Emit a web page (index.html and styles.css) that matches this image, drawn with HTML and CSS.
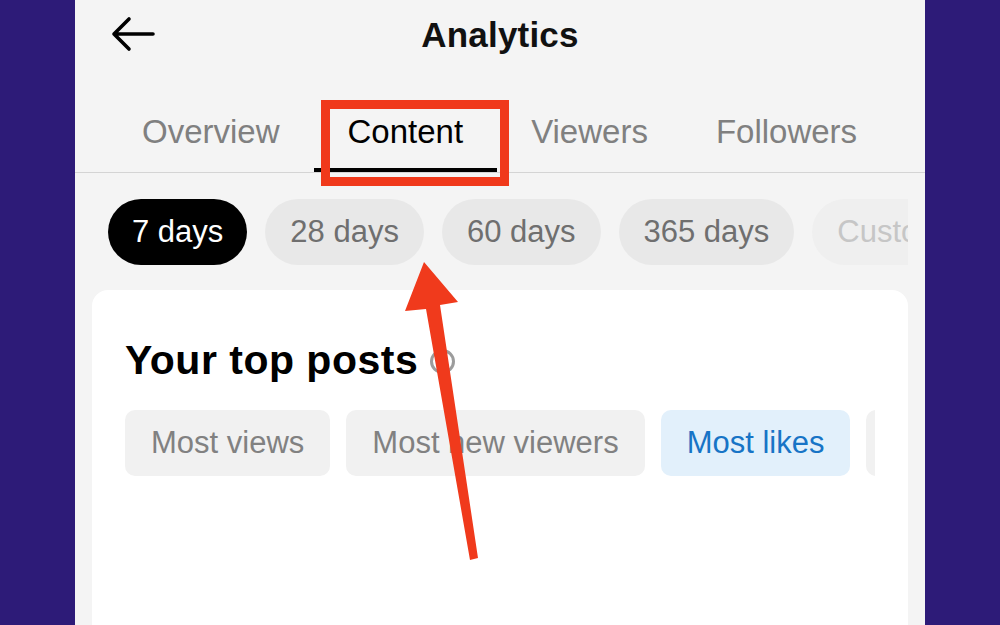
FILE: index.html
```html
<!DOCTYPE html>
<html>
<head>
<meta charset="utf-8">
<link rel="stylesheet" href="styles.css">
</head>
<body>
<div class="phone">
  <header class="topbar">
    <svg class="back" width="46" height="38" viewBox="0 0 46 38"><path d="M4 19 H43 M19 4 L4 19 L19 34" fill="none" stroke="#000" stroke-width="3.6" stroke-linecap="round" stroke-linejoin="round"/></svg>
    <h1 class="title">Analytics</h1>
  </header>
  <nav class="tabs">
    <div class="tab">Overview</div>
    <div class="tab active">Content</div>
    <div class="tab">Viewers</div>
    <div class="tab">Followers</div>
  </nav>
  <div class="main">
    <div class="chips">
      <div class="chip on">7 days</div>
      <div class="chip">28 days</div>
      <div class="chip">60 days</div>
      <div class="chip">365 days</div>
      <div class="chip faded">Custom</div>
    </div>
    <section class="card">
      <h2 class="card-title">Your top posts <span class="info"></span></h2>
      <div class="pills">
        <div class="pill">Most views</div>
        <div class="pill">Most new viewers</div>
        <div class="pill sel">Most likes</div>
        <div class="pill">Most comments</div>
      </div>
    </section>
  </div>
  <div class="hl-box"></div>
  <svg class="arrow" width="850" height="625" viewBox="0 0 850 625"><polygon points="349,262 383,302 365,305 403,558 395,560 351,309 330,311" fill="#f03a1c"/></svg>
</div>
</body>
</html>
```

FILE: styles.css
```css
* { box-sizing: border-box; }
html, body { margin: 0; padding: 0; }
body {
  background: #2d1b78;
  font-family: "Liberation Sans", Arial, sans-serif;
  height: 625px;
  overflow: hidden;
}
.phone {
  position: relative;
  width: 850px;
  height: 625px;
  margin: 0 auto;
  background: #f4f4f4;
  overflow: hidden;
}
.topbar {
  height: 70px;
  position: relative;
  display: flex;
  align-items: center;
  justify-content: center;
}
.back {
  position: absolute;
  left: 35px;
  top: 15px;
}
.title {
  margin: 0;
  font-size: 35px;
  font-weight: 700;
  color: #111;
  line-height: 40px;
  letter-spacing: 0.2px;
}
.tabs {
  display: flex;
  padding-left: 33px;
  border-bottom: 1.5px solid #d4d4d4;
}
.tab {
  padding: 42px 34px 16px;
  font-size: 33px;
  line-height: 40px;
  color: #808080;
  border-bottom: 4px solid transparent;
}
.tab.active {
  color: #000;
  border-bottom-color: #000;
}
.main {
  padding: 0 17px;
}
.chips {
  display: flex;
  gap: 18px;
  margin-top: 26px;
  padding-left: 16px;
  overflow: hidden;
}
.chip {
  flex: none;
  height: 66px;
  padding: 0 25px;
  border-radius: 33px;
  background: #e8e8e8;
  color: #6f6f6f;
  font-size: 31px;
  display: flex;
  align-items: center;
}
.chip.on {
  background: #000;
  color: #fff;
  padding: 0 24px;
}
.chip.faded {
  background: #efefef;
  color: #c6c6c6;
}
.card {
  margin-top: 25px;
  background: #fff;
  border-radius: 16px;
  height: 400px;
  padding: 45px 33px 0;
}
.card-title {
  margin: 0;
  font-size: 41px;
  line-height: 50px;
  font-weight: 700;
  letter-spacing: 0.5px;
  color: #000;
  display: flex;
  align-items: center;
}
.info {
  display: inline-block;
  width: 25px;
  height: 25px;
  border: 3px solid #9c9c9c;
  border-radius: 50%;
  margin-left: 12px;
  margin-top: 3px;
}
.pills {
  display: flex;
  gap: 16px;
  margin-top: 25px;
  overflow: hidden;
}
.pill {
  flex: none;
  height: 66px;
  padding: 0 26px;
  border-radius: 10px;
  background: #f1f1f1;
  color: #818181;
  font-size: 31px;
  display: flex;
  align-items: center;
}
.pill.sel {
  background: #e2f0fb;
  color: #1774c6;
}
.hl-box {
  position: absolute;
  left: 246px;
  top: 100px;
  width: 188px;
  height: 86px;
  border: 9px solid #f0391b;
}
.arrow {
  position: absolute;
  left: 0;
  top: 0;
  pointer-events: none;
}
```
